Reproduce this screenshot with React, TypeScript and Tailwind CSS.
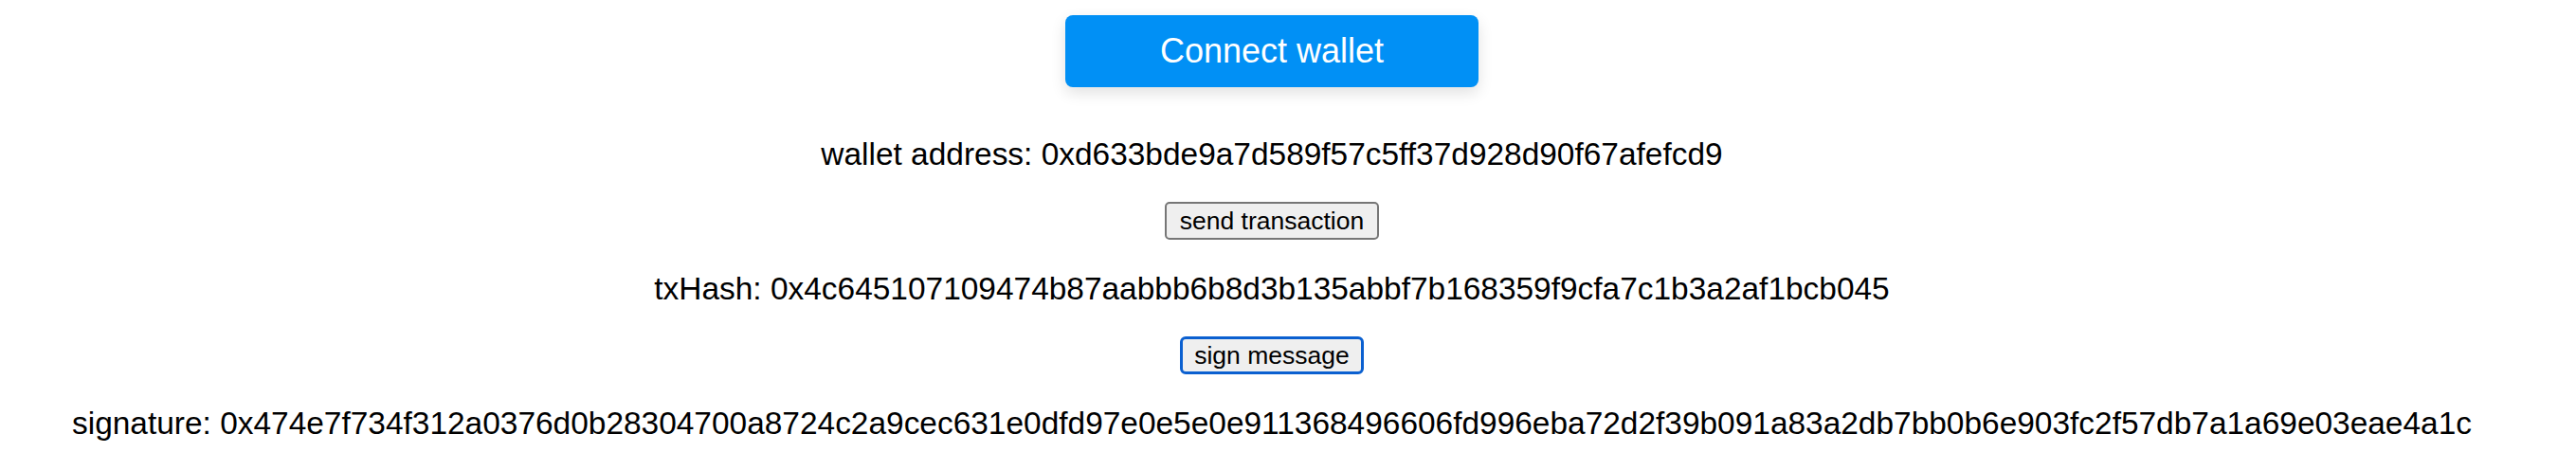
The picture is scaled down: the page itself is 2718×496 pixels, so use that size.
import React from "react";

export default function App() {
  const font = { fontFamily: '"Liberation Sans", Arial, Helvetica, sans-serif' };
  return (
    <div className="w-full min-h-[496px] bg-white flex flex-col items-center pt-[16px] pr-[34px] text-black" style={font}>
      <button className="w-[436px] h-[76px] rounded-[8px] bg-[#0190f5] text-white text-[36px] leading-none shadow-[0_6px_16px_rgba(0,0,0,0.12)]">
        Connect wallet
      </button>
      <p className="mt-[52px] text-[33.45px] leading-[38px]">
        wallet address: 0xd633bde9a7d589f57c5ff37d928d90f67afefcd9
      </p>
      <button className="mt-[31px] h-[40px] w-[226px] rounded-[5px] border-2 border-[#767676] bg-[#efefef] text-[26.5px] leading-none">
        send transaction
      </button>
      <p className="mt-[33px] text-[33.45px] leading-[38px]">
        txHash: 0x4c645107109474b87aabbb6b8d3b135abbf7b168359f9cfa7c1b3a2af1bcb045
      </p>
      <button className="mt-[31px] h-[40px] w-[194px] rounded-[6px] border-[3px] border-[#0b60d0] bg-[#efefef] text-[26.5px] leading-none">
        sign message
      </button>
      <p className="mt-[33px] text-[33.45px] leading-[38px] whitespace-nowrap">
        signature: 0x474e7f734f312a0376d0b28304700a8724c2a9cec631e0dfd97e0e5e0e911368496606fd996eba72d2f39b091a83a2db7bb0b6e903fc2f57db7a1a69e03eae4a1c
      </p>
    </div>
  );
}
